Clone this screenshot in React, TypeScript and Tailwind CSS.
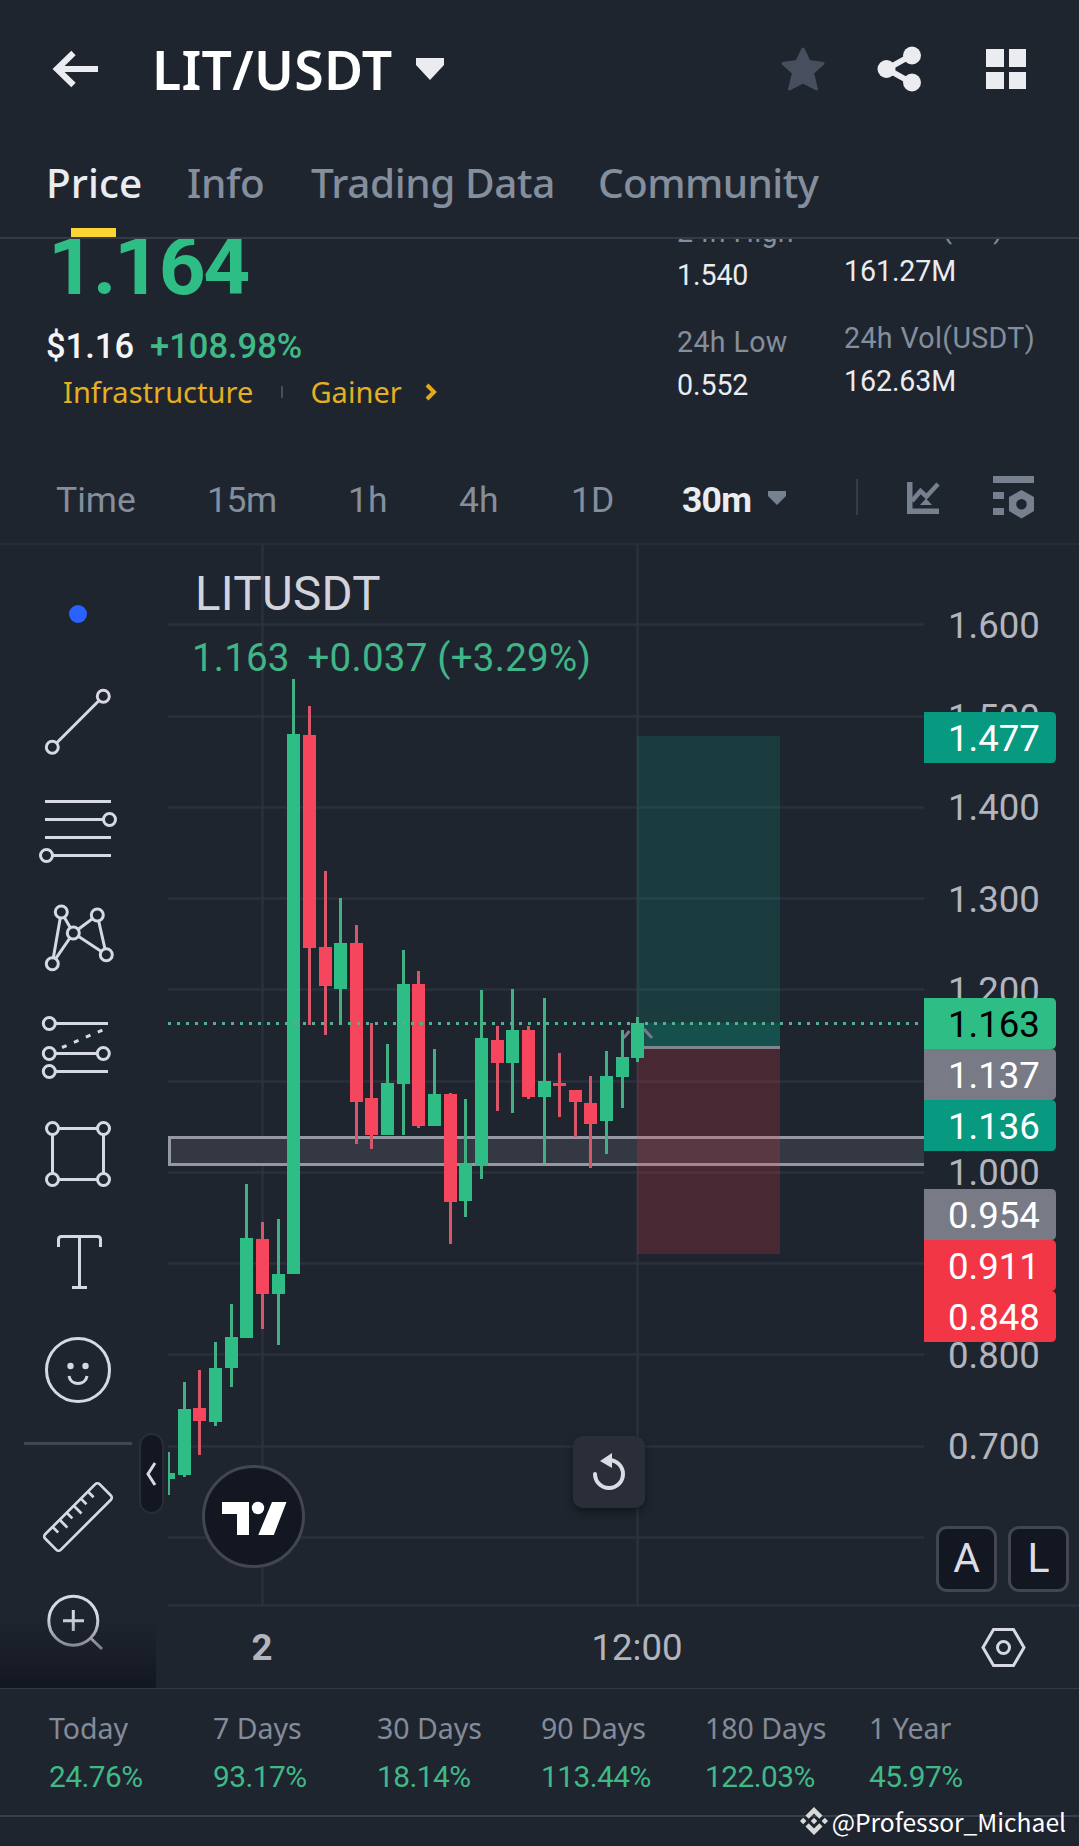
import type { ReactNode } from "react";

const GREEN = "#2ebd85";
const RED = "#f6465d";

// x, high, body top, body bottom, low, direction
const candles: [number, number, number, number, number, "up" | "down"][] = [
  [168.5, 1452, 1473, 1479, 1495, "up"],
  [184.5, 1382, 1409, 1475, 1477, "up"],
  [199.5, 1370, 1408, 1421, 1455, "down"],
  [215.5, 1342, 1368, 1422, 1426, "up"],
  [231.5, 1304, 1337, 1368, 1387, "up"],
  [246.5, 1184, 1238, 1338, 1338, "up"],
  [262.5, 1222, 1239, 1294, 1329, "down"],
  [278.5, 1219, 1274, 1294, 1345, "up"],
  [293.5, 679, 734, 1274, 1274, "up"],
  [309.5, 706, 735, 948, 1025, "down"],
  [325.5, 871, 947, 986, 1035, "down"],
  [340.5, 898, 943, 989, 1025, "up"],
  [356.5, 925, 943, 1102, 1144, "down"],
  [371.5, 1023, 1098, 1135, 1149, "down"],
  [387.5, 1044, 1083, 1135, 1135, "up"],
  [403.5, 950, 984, 1084, 1135, "up"],
  [418.5, 971, 984, 1126, 1128, "down"],
  [434.5, 1049, 1094, 1126, 1126, "up"],
  [450.5, 1093, 1094, 1202, 1244, "down"],
  [465.5, 1099, 1163, 1201, 1217, "up"],
  [481.5, 990, 1038, 1166, 1179, "up"],
  [497.5, 1026, 1040, 1063, 1111, "down"],
  [512.5, 989, 1030, 1063, 1113, "up"],
  [528.5, 1026, 1030, 1097, 1099, "down"],
  [544.5, 998, 1081, 1097, 1163, "up"],
  [559.5, 1053, 1083, 1086, 1117, "down"],
  [575.5, 1090, 1090, 1102, 1137, "down"],
  [590.5, 1076, 1103, 1124, 1168, "down"],
  [606.5, 1051, 1076, 1121, 1154, "up"],
  [622.5, 1030, 1057, 1077, 1108, "up"],
  [637.5, 1017, 1023, 1058, 1062, "up"],
];

const gridLines = [624.5, 716.5, 807.5, 898.5, 989.5, 1081.5, 1172.5, 1263.5, 1354.5, 1446.5, 1537.5];

const axisLabels = [
  { y: 638, text: "1.600" },
  { y: 729.5, text: "1.500" },
  { y: 820, text: "1.400" },
  { y: 912, text: "1.300" },
  { y: 1003, text: "1.200" },
  { y: 1185, text: "1.000" },
  { y: 1368, text: "0.800" },
  { y: 1459, text: "0.700" },
];

const priceTags = [
  { y: 712, text: "1.477", bg: "#089981", fg: "#ffffff" },
  { y: 998, text: "1.163", bg: GREEN, fg: "#000000" },
  { y: 1049, text: "1.137", bg: "#787b86", fg: "#ffffff" },
  { y: 1100, text: "1.136", bg: "#089981", fg: "#ffffff" },
  { y: 1189, text: "0.954", bg: "#787b86", fg: "#ffffff" },
  { y: 1240, text: "0.911", bg: "#f23645", fg: "#ffffff" },
  { y: 1291, text: "0.848", bg: "#f23645", fg: "#ffffff" },
];

const performance = [
  { label: "Today", value: "24.76%" },
  { label: "7 Days", value: "93.17%" },
  { label: "30 Days", value: "18.14%" },
  { label: "90 Days", value: "113.44%" },
  { label: "180 Days", value: "122.03%" },
  { label: "1 Year", value: "45.97%" },
];

function Header() {
  return (
    <header className="flex h-[138px] items-center font-['Noto_Sans']">
      <svg className="ml-[52px] h-[38px] w-[48px]" viewBox="0 0 48 38" fill="none" stroke="#eaecef" strokeWidth="6.2">
        <path d="M46 19H5M21.5 3L5 19l16.500 16" />
      </svg>
      <h1 className="ml-[52px] w-[242px] pt-[2px] text-[53.5px] leading-[138px] font-semibold tracking-[0.3px] whitespace-nowrap text-white">
        LIT/USDT
      </h1>
      <svg className="ml-[22px] h-[22px] w-[28px]" viewBox="0 0 28 22">
        <path d="M0 0h28v7L14 22 0 7z" fill="#eaecef" />
      </svg>
      <div className="mr-[53px] ml-auto flex items-center gap-[51px]">
        <svg className="h-[46px] w-[46px]" viewBox="0 0 46 46">
          <path
            d="M23 3l6 12.500 14 2-10.500 9.500 4 16L23 36 9.500 43l4-16L3 17.500l14-2z"
            fill="#474f5e"
            stroke="#474f5e"
            strokeWidth="3"
            strokeLinejoin="round"
          />
        </svg>
        <svg className="h-[46px] w-[44px]" viewBox="0 0 44 46" fill="#eaecef">
          <path d="M9 23.500L35 9M9 22.500L35 37" stroke="#eaecef" strokeWidth="6" />
          <circle cx="9.500" cy="23" r="9" />
          <circle cx="35" cy="9.500" r="9" />
          <circle cx="35" cy="36.500" r="9" />
        </svg>
        <div className="ml-[14px] grid h-[40px] w-[40px] grid-cols-2 gap-[5px]">
          <span className="bg-[#eaecef]" />
          <span className="bg-[#eaecef]" />
          <span className="bg-[#eaecef]" />
          <span className="bg-[#eaecef]" />
        </div>
      </div>
    </header>
  );
}

function Tabs() {
  return (
    <nav className="flex h-[101px] border-b-2 border-[#343b47] pl-[46px] font-['Noto_Sans'] text-[40.5px] leading-[90px] font-medium tracking-[-0.4px] whitespace-nowrap text-[#848e9c]">
      <div className="w-[141px] tracking-[0.1px] text-[#eaecef]">
        Price
        <div className="ml-[25px] h-[9px] w-[45px] bg-[#fcd535]" />
      </div>
      <div className="w-[124px]">Info</div>
      <div className="w-[287px]">Trading Data</div>
      <div className="tracking-[-0.6px]">Community</div>
    </nav>
  );
}

function Stat({ label, value }: { label: string; value: string }) {
  return (
    <div className="mb-[24px] whitespace-nowrap">
      <div className="tracking-[0.35px] text-[#848e9c]">{label}</div>
      <div className="tracking-[-0.1px] text-[#eaecef]">{value}</div>
    </div>
  );
}

function Summary() {
  return (
    <section className="flex h-[216px] overflow-hidden">
      <div className="-mt-[23px] w-[677px] pl-[46px]">
        <div className="pl-[2px] text-[82px] leading-[100px] font-bold tracking-[-2.4px] text-[#2ebd85]">1.164</div>
        <div className="flex h-[59px] gap-[16px] pt-[1px] text-[34.5px] leading-[59px] font-medium whitespace-nowrap">
          <span className="text-[#f5f5f7]">$1.16</span>
          <span className="text-[#3fba87]">+108.98%</span>
        </div>
        <div className="flex h-[34px] items-center pl-[17px] font-['Noto_Sans'] text-[29px] leading-[34px] tracking-[0.05px] text-[#e3b021]">
          <span>Infrastructure</span>
          <span className="ml-[28px] h-[12px] w-[2px] bg-[#474d57]" />
          <span className="ml-[27px]">Gainer</span>
          <svg className="ml-[23px] h-[18px] w-[12px]" viewBox="0 0 12 18" fill="none" stroke="#e3a91a" strokeWidth="4">
            <path d="M2 2l7 7-7 7" />
          </svg>
        </div>
      </div>
      <div className="-mt-[28px] w-[167px] text-[28.6px] leading-[43px]">
        <Stat label="24h High" value="1.540" />
        <Stat label="24h Low" value="0.552" />
      </div>
      <div className="-mt-[32px] text-[28.6px] leading-[43px]">
        <Stat label="24h Vol(LIT)" value="161.27M" />
        <Stat label="24h Vol(USDT)" value="162.63M" />
      </div>
    </section>
  );
}

function Intervals() {
  return (
    <div className="flex h-[90px] items-center border-b-2 border-[#272d38] pt-[2px] pl-[56px] text-[35.5px] leading-[86px] text-[#848e9c]">
      <span className="w-[151px]">Time</span>
      <span className="w-[141px] tracking-[-0.5px]">15m</span>
      <span className="w-[111px]">1h</span>
      <span className="w-[112px]">4h</span>
      <span className="w-[111px]">1D</span>
      <span className="w-[86px] font-bold tracking-[-0.8px] text-[#eaecef]">30m</span>
      <svg className="-mt-[5px] h-[14px] w-[18px]" viewBox="0 0 18 14">
        <path d="M0 0h18v5L9 14 0 5z" fill="#76808f" />
      </svg>
      <span className="-mt-[6px] ml-[70px] h-[36px] w-[2px] bg-[#363d49]" />
      <svg className="-mt-[5px] ml-[49px] h-[34px] w-[34px]" viewBox="0 0 34 34" fill="none" stroke="#76808f" strokeWidth="5.500">
        <path d="M2.750 1v29.250H32" />
        <path d="M5 20l8.500-10 6 5.500L31 3" strokeWidth="4.500" />
        <path d="M13 24l6-6.500 6 6.500z" fill="#76808f" stroke="none" />
      </svg>
      <svg className="-mt-[5px] ml-[52px] h-[43px] w-[41px]" viewBox="0 0 41 43" fill="#76808f">
        <path d="M0 0h41v7H0zM0 16h11v7H0zM0 32h11v7H0z" />
        <path d="M28.500 14L41 21v14l-12.500 7.500L16 35V21zM28.500 23a5.300 5.300 0 1 0 0 10.600 5.300 5.300 0 1 0 0-10.600z" fillRule="evenodd" />
      </svg>
    </div>
  );
}

function Tool({ children }: { children: ReactNode }) {
  return (
    <svg className="block h-[108px] w-[156px] shrink-0" viewBox="-78 -54 156 108" fill="none" stroke="#d6d9e3" strokeWidth="3">
      {children}
    </svg>
  );
}

function Dots({ at }: { at: [number, number][] }) {
  return (
    <>
      {at.map(([x, y]) => (
        <circle key={`${x},${y}`} cx={x} cy={y} r="6" fill="#1f252f" />
      ))}
    </>
  );
}

function DrawingTools() {
  return (
    <aside className="relative flex w-[156px] shrink-0 flex-col pt-[15px]">
      <Tool>
        <circle r="9" fill="#2962ff" stroke="none" />
      </Tool>
      <Tool>
        <path d="M-25.700 25.300L25.300-25.700" />
        <Dots at={[[25.3, -25.7], [-25.7, 25.3]]} />
      </Tool>
      <Tool>
        <path d="M-33-28.500H33M-33-10.500H31M-33 7.500H33M-31 25.500H33" />
        <Dots at={[[31.5, -10.5], [-31.5, 25.5]]} />
      </Tool>
      <Tool>
        <path d="M-25.700 25.700L-16.700-26-4.700-5zM-4.700-5L19.300-23l9 39.700z" />
        <Dots at={[[-16.7, -26], [19.3, -23], [-4.7, -5], [-25.7, 25.7], [28.3, 16.7]]} />
      </Tool>
      <Tool>
        <path d="M-28-22.500H30M-28 7.500H25M-28 25.500H30" />
        <path d="M-16 1.500L28-17.500" strokeDasharray="5 8" />
        <Dots at={[[-28.7, -22.5], [-28.7, 7.5], [25.3, 7.5], [-28.7, 25.5]]} />
      </Tool>
      <Tool>
        <path d="M-25.500-25.500h51v51h-51z" />
        <Dots at={[[-25.5, -25.5], [25.5, -25.5], [-25.5, 25.5], [25.5, 25.5]]} />
      </Tool>
      <Tool>
        <path d="M-19.500-15v-7.500q0-3 3-3h36q3 0 3 3v7.500M1.500-25.500v51M-6 25.500h15" />
      </Tool>
      <Tool>
        <circle r="31.500" />
        <circle cx="-7.500" cy="-4" r="3.200" fill="#d6d9e3" stroke="none" />
        <circle cx="7.500" cy="-4" r="3.200" fill="#d6d9e3" stroke="none" />
        <path d="M-9 6c1.500 10 16.500 10 18 0" />
      </Tool>
      <div className="mt-[18px] mb-[18px] ml-[24px] h-[3px] w-[108px] shrink-0 bg-[#434651]" />
      <Tool>
        <g transform="rotate(-45)" strokeWidth="2.700">
          <rect x="-38.500" y="-11" width="77" height="22" rx="3" />
          <path d="M-25-11v8M-15-11v11M-5-11v8M5-11v11M15-11v8M25-11v8" />
        </g>
      </Tool>
      <Tool>
        <circle cx="-4.700" cy="-4.300" r="24.500" />
        <path d="M-15-4.300H6M-4.700-15V6M13 13.500L24 24" />
      </Tool>
      <div className="absolute bottom-0 left-0 h-[72px] w-full bg-linear-to-b from-[#131722]/0 to-[#131722]" />
    </aside>
  );
}

function Chart() {
  return (
    <svg className="block h-[1143px] w-[923px]" viewBox="156 545 923 1143" fontFamily="Roboto, sans-serif">
      <g stroke="#2b313c" strokeWidth="2.500">
        {gridLines.map((y) => (
          <path key={y} d={`M168 ${y}H924`} />
        ))}
        <path d="M262.500 545V1605M637.500 545V1605M168 1605.500H1079" />
      </g>

      {/* support zone */}
      <rect x="168" y="1137" width="756" height="28" fill="#343843" />
      <path d="M924 1137.500H169.500V1164.500H924" fill="none" stroke="#9598a2" strokeWidth="3" />

      {/* long position */}
      <rect x="637" y="736" width="143" height="311" fill="#089981" fillOpacity="0.2" />
      <rect x="637" y="1023" width="143" height="24" fill="#089981" fillOpacity="0.22" />
      <rect x="637" y="1048" width="143" height="206" fill="#f23645" fillOpacity="0.2" />
      <path d="M637 1047.500H780" stroke="#80858e" strokeWidth="3" />
      <path d="M623.500 1038l6-7M644 1029l8 9" fill="none" stroke="#787b86" strokeWidth="3" />

      <svg x="168" y="545" width="756" height="1060" viewBox="168 545 756 1060">
        {candles.map(([x, high, top, bottom, low, dir]) => (
          <g key={x}>
            <rect x={x - 1.5} y={high} width="3" height={low - high} fill={dir === "up" ? "#43b083" : "#d8566a"} />
            <rect x={x - 6.5} y={top} width="13" height={bottom - top} fill={dir === "up" ? GREEN : RED} />
          </g>
        ))}
      </svg>
      <path d="M168 1023.500H924" stroke="#4fb38c" strokeWidth="3" strokeDasharray="3 6" />

      <text x="195" y="609.500" fontSize="47.400" letterSpacing="0.300" fill="#d1d4dc">LITUSDT</text>
      <text x="192" y="670.500" fontSize="38.500" letterSpacing="0.200" fill="#3fb588">1.163</text>
      <text x="307.500" y="670.500" fontSize="38.500" letterSpacing="0.250" fill="#3fb588">+0.037 (+3.29%)</text>

      <g fontSize="36.600" fill="#b2b5be">
        {axisLabels.map(({ y, text }) => (
          <text key={text} x="948" y={y}>{text}</text>
        ))}
        <text x="262" y="1660" textAnchor="middle" fontWeight="700">2</text>
        <text x="637" y="1660" textAnchor="middle">12:00</text>
      </g>
      {priceTags.map(({ y, text, bg, fg }) => (
        <g key={text}>
          <path d={`M924 ${y}h127q5 0 5 5v41q0 5-5 5H924z`} fill={bg} />
          <text x="948" y={y + 39} fontSize="36.600" fill={fg}>{text}</text>
        </g>
      ))}

      <g fill="none" stroke="#d6d9e3" strokeWidth="3">
        <path d="M983 1647.500l10.500-18h20l10.500 18-10.500 18h-20z" />
        <circle cx="1003.500" cy="1647.500" r="6" />
      </g>
    </svg>
  );
}

function ChartOverlays() {
  return (
    <>
      <button className="absolute top-[888px] left-[139px] flex h-[81px] w-[25px] items-center justify-center rounded-full border-2 border-[#282d38] bg-[#131722]">
        <svg className="h-[24px] w-[12px]" viewBox="0 0 12 24" fill="none" stroke="#d6d9e3" strokeWidth="3">
          <path d="M9 1L2 12l7 11" />
        </svg>
      </button>
      <div className="absolute top-[920px] left-[202px] h-[103px] w-[103px] rounded-full border-[3px] border-[#434651] bg-[#131722]">
        <svg className="h-[97px] w-[97px]" viewBox="205 1468 97 97" fill="#ffffff">
          <path d="M222 1502h27v33h-12v-21h-15zM272 1502h14.500l-12.700 33h-15.500z" />
          <circle cx="258" cy="1508" r="6.200" />
        </svg>
      </div>
      <button className="absolute top-[891px] left-[573px] flex h-[72px] w-[72px] items-center justify-center rounded-[10px] bg-[#2a2e39] shadow-[0_4px_10px_rgba(0,0,0,0.4)]">
        <svg className="h-[40px] w-[34px]" viewBox="0 0 34 40" fill="none" stroke="#dbdde6" strokeWidth="4">
          <path d="M3 22a14 14 0 1 0 14-14" strokeLinecap="round" />
          <path d="M8 9L20 1v15z" fill="#dbdde6" stroke="none" />
        </svg>
      </button>
      <div className="absolute top-[981px] left-[936px] flex gap-[11px] text-[41px] text-[#dbdde6]">
        <button className="h-[66px] w-[61px] rounded-[11px] border-[3px] border-[#434651] bg-[#131722] pb-[2px] leading-[56px]">A</button>
        <button className="h-[66px] w-[61px] rounded-[11px] border-[3px] border-[#434651] bg-[#131722] pb-[2px] leading-[56px]">L</button>
      </div>
    </>
  );
}

function Watermark() {
  return (
    <div className="absolute right-[13px] bottom-[8px] flex items-center gap-[4px] text-[24.6px] leading-[34px] whitespace-nowrap text-white">
      <svg className="h-[28px] w-[28px]" viewBox="0 0 28 28" fill="#d9d9d9">
        <path d="M14 0l8.500 8.500-3.200 3.200L14 6.400l-5.300 5.300-3.200-3.200zM14 28l-8.500-8.500 3.200-3.200 5.300 5.300 5.300-5.300 3.200 3.200zM14 10.800l3.200 3.200-3.200 3.200-3.200-3.200zM3.200 10.800L6.400 14l-3.200 3.200L0 14zM24.800 10.800L28 14l-3.200 3.200-3.200-3.200z" />
      </svg>
      <span className="font-['Noto_Sans_CJK_SC','Noto_Sans',sans-serif]">@Professor_Michael</span>
    </div>
  );
}

export default function App() {
  return (
    <div className="relative h-[1846px] w-[1079px] overflow-hidden bg-[#1f252f] font-[Roboto]">
      <Header />
      <Tabs />
      <Summary />
      <Intervals />
      <main className="relative flex h-[1143px]">
        <DrawingTools />
        <Chart />
        <ChartOverlays />
      </main>
      <footer className="flex h-[129px] border-t border-b-2 border-t-[#333a45] border-b-[#383f4b] pt-[15px] pl-[49px] whitespace-nowrap">
        {performance.map(({ label, value }) => (
          <div key={label} className="w-[164px]">
            <div className="font-['Noto_Sans'] text-[28.5px] leading-[48px] text-[#848b99]">{label}</div>
            <div className="text-[29.8px] leading-[50px] tracking-[-0.5px] text-[#3fba87]">{value}</div>
          </div>
        ))}
      </footer>
      <Watermark />
    </div>
  );
}
